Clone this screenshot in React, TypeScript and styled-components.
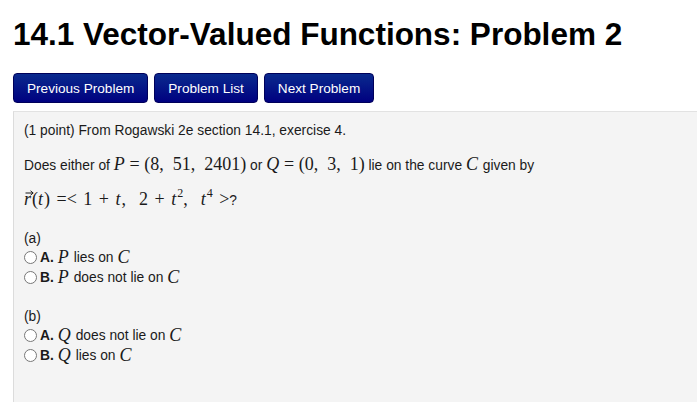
import React from "react";
import styled, { createGlobalStyle } from "styled-components";

const Global = createGlobalStyle`
  html, body { margin: 0; padding: 0; background: #fff; }
  body { font-family: "Liberation Sans", Arial, sans-serif; color: #1a1a1a; }
`;

const Page = styled.div`
  padding: 0 0 0 13px;
  height: 402px;
  overflow: hidden;
  display: flex;
  flex-direction: column;
`;

const Title = styled.h1`
  margin: 0;
  padding-top: 16px;
  font-size: 31.5px;
  line-height: 36px;
  font-weight: bold;
  color: #000;
`;

const Nav = styled.div`
  display: flex;
  gap: 6px;
  margin-top: 21px;
`;

const NavButton = styled.button`
  font-family: "Liberation Sans", Arial, sans-serif;
  font-size: 13.6px;
  color: #fff;
  height: 30px;
  padding: 0 13px;
  border: 1px solid #00005a;
  border-radius: 4px;
  background: linear-gradient(#0a2a8e, #000080);
  cursor: pointer;
`;

const Panel = styled.div`
  margin-top: 8px;
  flex: 1;
  background: #f4f4f4;
  border-top: 1px solid #e2e2e2;
  border-left: 1px solid #dcdcdc;
  padding: 9px 10px;
  font-size: 13.8px;
  color: #1a1a1a;
`;

const Para = styled.div<{ $ws?: number }>`
  line-height: 20px;
  margin-bottom: 13px;
  white-space: nowrap;
  word-spacing: ${(p) => p.$ws ?? 0}px;
`;

const PartLabel = styled.div<{ $top: number }>`
  line-height: 17px;
  margin-top: ${(p) => p.$top}px;
`;

const Option = styled.label`
  display: flex;
  align-items: center;
  height: 20px;
  white-space: nowrap;
`;

const Radio = styled.input`
  margin: 0 3px 0 0;
  width: 13px;
  height: 13px;
`;

const Letter = styled.b`
  margin-right: 4px;
`;

const M = styled.span`
  font-family: "Liberation Serif", "DejaVu Serif", serif;
  font-size: 18px;
`;

const MI = styled.i`
  font-family: "Liberation Serif", "DejaVu Serif", serif;
  font-style: italic;
  font-size: 18px;
  padding-right: 1px;
`;

const Sup = styled.sup`
  font-family: "Liberation Serif", "DejaVu Serif", serif;
  font-size: 12px;
  vertical-align: 8px;
  line-height: 0;
`;

const Vec = styled.span`
  position: relative;
  display: inline-block;
`;

const ArrowSvg = styled.svg`
  position: absolute;
  left: 1px;
  top: 1px;
  width: 9px;
  height: 6px;
`;

export default function App() {
  return (
    <>
      <Global />
      <Page>
        <Title>14.1 Vector-Valued Functions: Problem 2</Title>
        <Nav>
          <NavButton>Previous Problem</NavButton>
          <NavButton>Problem List</NavButton>
          <NavButton>Next Problem</NavButton>
        </Nav>
        <Panel>
          <Para>(1 point) From Rogawski 2e section 14.1, exercise 4.</Para>
          <Para>
            Does either of <MI>P</MI> <M>= (8,&nbsp; 51,&nbsp; 2401)</M> or{" "}
            <MI>Q</MI> <M>= (0,&nbsp; 3,&nbsp; 1)</M> lie on the curve <MI>C</MI>{" "}
            given by
          </Para>
          <Para $ws={2}>
            <Vec>
              <MI>r</MI>
              <ArrowSvg viewBox="0 0 9 6">
                <path d="M0.5 3 H8 M5.5 0.8 L8.2 3 L5.5 5.2" stroke="#1a1a1a" strokeWidth="1" fill="none" />
              </ArrowSvg>
            </Vec>
            <M>(</M>
            <MI>t</MI>
            <M>) =&lt; 1 + </M>
            <MI>t</MI>
            <M>,&nbsp; 2 + </M>
            <MI>t</MI>
            <Sup>2</Sup>
            <M>,&nbsp; </M>
            <MI>t</MI>
            <Sup>4</Sup>
            <M> &gt;</M>?
          </Para>
          <PartLabel $top={19}>(a)</PartLabel>
          <Option>
            <Radio type="radio" name="a" />
            <Letter>A.</Letter>
            <MI>P</MI>&nbsp;lies on&nbsp;<MI>C</MI>
          </Option>
          <Option>
            <Radio type="radio" name="a" />
            <Letter>B.</Letter>
            <MI>P</MI>&nbsp;does not lie on&nbsp;<MI>C</MI>
          </Option>
          <PartLabel $top={21}>(b)</PartLabel>
          <Option>
            <Radio type="radio" name="b" />
            <Letter>A.</Letter>
            <MI>Q</MI>&nbsp;does not lie on&nbsp;<MI>C</MI>
          </Option>
          <Option>
            <Radio type="radio" name="b" />
            <Letter>B.</Letter>
            <MI>Q</MI>&nbsp;lies on&nbsp;<MI>C</MI>
          </Option>
        </Panel>
      </Page>
    </>
  );
}
